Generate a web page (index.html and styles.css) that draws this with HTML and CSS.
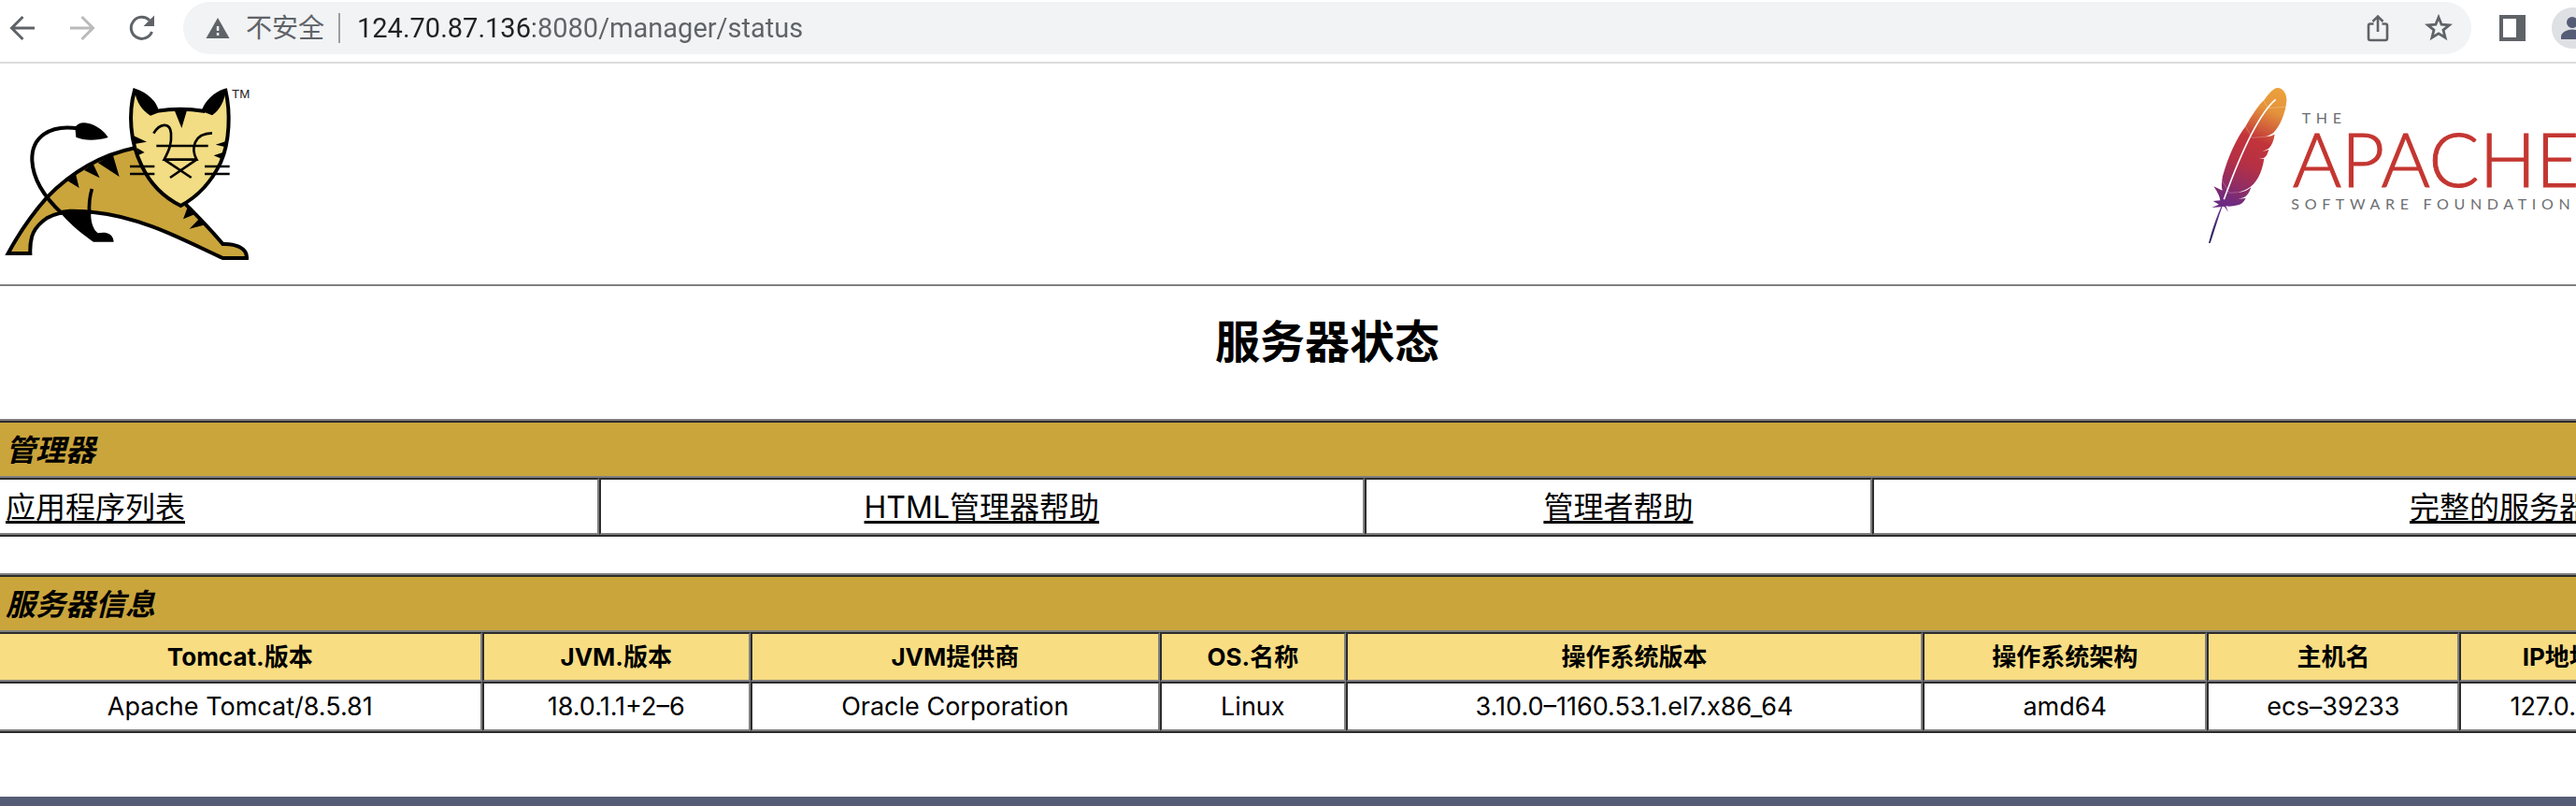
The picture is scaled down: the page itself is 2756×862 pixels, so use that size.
FILE: index.html
```html
<!DOCTYPE html>
<html lang="zh-CN">
<head>
<meta charset="utf-8">
<title>/manager</title>
<link rel="stylesheet" href="styles.css">
</head>
<body>
<div class="toolbar">
  <div class="nav">
    <button type="button" class="icon-button" aria-label="后退">
      <svg width="28" height="28" viewBox="0 0 28 28" fill="none" stroke="#5f6368" stroke-width="3"><path d="M27 14H3M14.500 2L2.500 14l12 12"/></svg>
    </button>
    <button type="button" class="icon-button" aria-label="前进" disabled>
      <svg width="28" height="28" viewBox="0 0 28 28" fill="none" stroke="#bababa" stroke-width="3"><path d="M1 14h24M13.500 2l12 12-12 12"/></svg>
    </button>
    <button type="button" class="icon-button" aria-label="重新加载">
      <svg width="28" height="28" viewBox="0 0 28 28"><path d="M24.500 18A11.500 11.500 0 1 1 22 5.800" fill="none" stroke="#5f6368" stroke-width="3"/><path d="M27 .5V12H15.500z" fill="#5f6368"/></svg>
    </button>
  </div>
  <div class="omnibox">
    <svg class="warn" width="26" height="24" viewBox="0 0 26 24"><path d="M13 1l12.500 22H.5z" fill="#5f6368"/><path d="M11.800 10h2.500v5h-2.500zM11.800 17h2.500v3h-2.500z" fill="#f1f3f4"/></svg>
    <label class="security" for="address">不安全</label>
    <input class="address" id="address" type="text" value="124.70.87.136:8080/manager/status" spellcheck="false">
    <button type="button" class="icon-button share" aria-label="分享">
      <svg width="24" height="30" viewBox="0 0 24 30" fill="none" stroke="#5f6368" stroke-width="2.600"><path d="M7.500 10.500H4a2 2 0 0 0-2 2V26a2 2 0 0 0 2 2h16a2 2 0 0 0 2-2V12.500a2 2 0 0 0-2-2h-3.500M12 19V3M6.500 8L12 2.500 17.500 8"/></svg>
    </button>
    <button type="button" class="icon-button" aria-label="加入书签">
      <svg width="30" height="30" viewBox="0 0 30 30" fill="none" stroke="#5f6368" stroke-width="2.800"><path d="M15 3.500l3.100 7.700 8.300.6-6.400 5.300 2.100 8.100L15 20.800l-7.100 4.400L10 17.100l-6.400-5.300 8.300-.6z"/></svg>
    </button>
  </div>
  <div class="actions">
    <button type="button" class="icon-button" aria-label="侧边栏">
      <svg width="28" height="28" viewBox="0 0 28 28"><path d="M0 0h28v28H0zM4 4v20h14V4z" fill="#5f6368" fill-rule="evenodd"/></svg>
    </button>
    <button type="button" class="icon-button" aria-label="用户">
      <svg width="44" height="44" viewBox="0 0 44 44"><circle cx="22" cy="22" r="22" fill="#dee0e4"/><circle cx="22" cy="16" r="6" fill="#555c75"/><path d="M10 34v-3c0-4.500 7-7.500 12-7.500S34 26.500 34 31v3z" fill="#555c75"/></svg>
    </button>
  </div>
</div>

<main class="page">
  <header class="logos">
    <a class="logo" href="#" aria-label="Tomcat">
      <svg width="280" height="210" viewBox="0 0 840 630" stroke-linejoin="miter">
        <path d="M26 573C60 510 105 445 150 394C230 312 320 258 432 235L596 415C640 460 680 500 715 543C755 541 794 556 792 588H715C590 530 450 455 300 441C240 434 190 436 150 460C108 488 95 520 97 573z" fill="#caa53c" stroke="#000" stroke-width="12"/>
        <path d="M250 172C160 158 100 200 103 275C106 340 150 400 200 446" fill="none" stroke="#000" stroke-width="12"/>
        <path d="M241 168C252 150 276 150 302 162C325 174 338 186 347 201C310 212 270 212 244 200z"/>
        <path d="M188 436C225 428 265 430 292 440C290 472 300 498 314 508C340 502 363 508 365 536H300C262 510 222 478 188 436z"/>
        <path d="M295 366C288 390 285 420 287 446" fill="none" stroke="#000" stroke-width="11"/>
        <path d="M214 338L243 318L254 363zM270 306L299 286L320 331zM314 282L362 256L383 327zM603 422L588 463L628 446zM637 464L608 494L660 481z"/>
        <path d="M432 50C468 62 498 88 503 116Q580 105 653 116C663 88 690 60 724 50C740 120 738 215 708 282C680 340 640 388 580 420C520 390 480 345 455 292C416 215 412 120 432 50z" fill="#f2dc84" stroke="#000" stroke-width="12"/>
        <path d="M430 44C470 58 498 82 506 122L483 131C457 114 438 90 430 44zM726 44C690 58 660 80 650 118L681 130C705 112 720 88 726 44zM560 114H600L583 171zM428 195L471 215L432 222zM440 235L464 249L444 258zM726 213L692 224L724 232zM718 248L686 259L714 271z"/>
        <path d="M417 294H496M417 318H496M657 294H737M657 318H737M502 228H668M493 188C512 156 546 150 549 188C551 220 545 238 527 272H631C612 236 622 188 681 187M527 272L614 330M631 272L546 330" fill="none" stroke="#000" stroke-width="8"/>
        <text class="trademark" x="744" y="75">TM</text>
      </svg>
    </a>
    <a class="logo" href="#" aria-label="The Apache Software Foundation">
      <svg width="500" height="190" viewBox="0 0 1500 570">
        <defs>
          <linearGradient id="feather" gradientUnits="userSpaceOnUse" x1="295" y1="45" x2="95" y2="535">
            <stop offset="0" stop-color="#eda13c"/><stop offset=".14" stop-color="#e4933c"/><stop offset=".25" stop-color="#d1603a"/><stop offset=".34" stop-color="#c2343a"/><stop offset=".5" stop-color="#b53045"/><stop offset=".64" stop-color="#912d63"/><stop offset=".75" stop-color="#702b80"/><stop offset=".86" stop-color="#5c2d86"/><stop offset="1" stop-color="#24215a"/>
          </linearGradient>
        </defs>
        <path d="M290 42C308 42 320 60 319 84C316 122 298 166 276 187C268 192 260 196 252 199Q270 197 281 191Q276 222 262 236L241 247L262 240Q256 262 247 266L231 270L247 269C240 315 222 350 193 366Q180 374 163 377Q185 378 205 361Q198 386 181 394L164 398L188 396Q178 416 163 418Q140 424 124 421L132 440L120 424L113 422C100 456 88 500 74 540H69C80 498 94 456 109 424L79 426L102 416L83 405L106 403Q104 386 85 358L113 371Q108 356 114 325C132 260 158 205 188 164C208 130 228 98 247 81C262 60 276 43 290 42z" fill="url(#feather)"/>
        <path d="M284 79C230 125 176 240 118 400" fill="none" stroke="#fff" stroke-width="5"/>
        <path d="M246 83L260 107L315 103M187 165L209 202L255 198M112 340L136 379L163 377" fill="none" stroke="#fff" stroke-width="1" opacity=".7"/>
        <text class="mark-small" x="368" y="157">THE</text>
        <text class="mark-large" x="338" y="361">APACHE</text>
        <text class="mark-small" x="334" y="432">SOFTWARE FOUNDATION</text>
      </svg>
    </a>
  </header>

  <h1 class="title">服务器状态</h1>

  <table class="grid links">
    <colgroup><col class="l1"><col class="l2"><col class="l3"><col></colgroup>
    <tr><td colspan="4" class="section">管理器</td></tr>
    <tr>
      <td class="start"><a href="#">应用程序列表</a></td>
      <td><a href="#">HTML管理器帮助</a></td>
      <td><a href="#">管理者帮助</a></td>
      <td class="end"><a href="#">完整的服务器状态</a></td>
    </tr>
  </table>

  <table class="grid info">
    <colgroup><col class="i1"><col class="i2"><col class="i3"><col class="i4"><col class="i5"><col class="i6"><col class="i7"><col></colgroup>
    <tr><td colspan="8" class="section">服务器信息</td></tr>
    <tr><th>Tomcat.版本</th><th>JVM.版本</th><th>JVM提供商</th><th>OS.名称</th><th>操作系统版本</th><th>操作系统架构</th><th>主机名</th><th>IP地址</th></tr>
    <tr><td>Apache Tomcat/8.5.81</td><td>18.0.1.1+2–6</td><td>Oracle Corporation</td><td>Linux</td><td>3.10.0–1160.53.1.el7.x86_64</td><td>amd64</td><td>ecs–39233</td><td>127.0.0.1</td></tr>
  </table>
</main>
<div class="band"></div>
</body>
</html>
```
FILE: styles.css
```css
* {
  box-sizing: border-box;
}

body {
  margin: 0;
  min-height: 100vh;
  display: flex;
  flex-direction: column;
  overflow: hidden;
  background: #fff;
  color: #000;
  font-family: Inter, "Noto Sans CJK SC", sans-serif;
}

/* Browser toolbar */
.toolbar {
  display: flex;
  align-items: center;
  padding: 2px 0 8px 10px;
  border-bottom: 2px solid #dcdcdc;
}

.icon-button {
  display: flex;
  flex: none;
  padding: 0;
  border: 0;
  background: none;
}

.nav {
  display: flex;
  gap: 36px;
  padding-right: 30px;
}

.omnibox {
  flex: 1;
  display: flex;
  align-items: center;
  height: 56px;
  padding: 0 20px 0 24px;
  border-radius: 28px;
  background: #f1f3f4;
}

.security {
  margin: 0 18px 0 17px;
  padding-right: 15px;
  border-right: 2px solid #9b9ea2;
  color: #5f6368;
  font-size: 28px;
  line-height: 32px;
}

.address {
  flex: 1;
  min-width: 0;
  padding: 0;
  border: 0;
  outline: 0;
  background: linear-gradient(90deg, #202124 189px, #5f6368 189px);
  -webkit-background-clip: text;
  background-clip: text;
  color: transparent;
  font: 29px/40px Roboto, sans-serif;
}

.share {
  margin-right: 38px;
}

.actions {
  display: flex;
  align-items: center;
  gap: 28px;
  margin-right: -18px;
  padding-left: 30px;
}

/* Page content is wider than the window and is cut at both sides */
.page {
  margin: 0 -88px 0 -4px;
}

.logos {
  display: flex;
  justify-content: space-between;
  padding: 12px 4px 14px;
  border-bottom: 2px solid #808080;
}

.logo,
.logo svg {
  display: block;
}

.trademark {
  font: 40px "Liberation Sans", sans-serif;
  fill: #222;
}

.mark-small {
  font: 400 48px Lato, sans-serif;
  letter-spacing: 17px;
  fill: #6d6e71;
}

.mark-large {
  font: 300 240px Lato, sans-serif;
  fill: #c43631;
  stroke: #c43631;
  stroke-width: 3px;
}

.title {
  margin: 0;
  padding: 32px 0 54px;
  font-size: 48px;
  line-height: 56px;
  text-align: center;
}

/* Tables with a raised frame and sunken cells */
.grid {
  width: 100%;
  table-layout: fixed;
  border: 2px solid;
  border-color: #808080 #2c2c2c #2c2c2c #808080;
  border-spacing: 0;
}

.grid td,
.grid th {
  padding: 0 6px;
  border: 2px solid;
  border-color: #2c2c2c #808080 #808080 #2c2c2c;
  text-align: center;
  white-space: nowrap;
}

.grid .section {
  height: 61px;
  padding-bottom: 4px;
  background: #caa53c;
  font-size: 32px;
  font-style: italic;
  font-weight: 700;
  text-align: left;
}

.links {
  margin-bottom: 39px;
}

.links td {
  height: 61px;
  padding-bottom: 4px;
  font-size: 32px;
}

.links .start {
  text-align: left;
}

.links .end {
  text-align: right;
}

.links a {
  color: #000;
  text-decoration-thickness: 3px;
  text-underline-offset: 3px;
}

.info {
  margin-bottom: 68px;
}

.info td {
  height: 53px;
  font-size: 27px;
}

.info th {
  height: 53px;
  padding-bottom: 4px;
  background: #f8dd83;
  font-size: 26px;
}

.l1 { width: 22.6%; }
.l2 { width: 28.8%; }
.l3 { width: 19.1%; }

.i1 { width: 18.2%; }
.i2 { width: 10.1%; }
.i3 { width: 15.4%; }
.i4 { width: 7%; }
.i5 { width: 21.7%; }
.i6 { width: 10.7%; }
.i7 { width: 9.5%; }

.band {
  flex: 1;
  min-height: 10px;
  background: #555c75;
}
```
